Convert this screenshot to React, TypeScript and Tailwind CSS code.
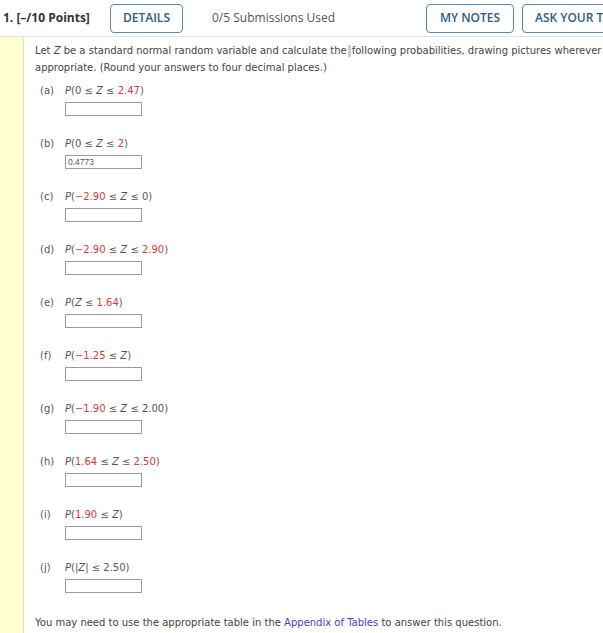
import React from "react";

const R = ({ children }: { children: React.ReactNode }) => (
  <span className="text-[#d63a3a]">{children}</span>
);
const I = ({ children }: { children: React.ReactNode }) => (
  <span className="italic">{children}</span>
);

const parts: { label: string; expr: React.ReactNode; value?: string }[] = [
  { label: "(a)", expr: <><I>P</I>(0 ≤ <I>Z</I> ≤ <R>2.47</R>)</> },
  { label: "(b)", expr: <><I>P</I>(0 ≤ <I>Z</I> ≤ <R>2</R>)</>, value: "0.4773" },
  { label: "(c)", expr: <><I>P</I>(<R>−2.90</R> ≤ <I>Z</I> ≤ 0)</> },
  { label: "(d)", expr: <><I>P</I>(<R>−2.90</R> ≤ <I>Z</I> ≤ <R>2.90</R>)</> },
  { label: "(e)", expr: <><I>P</I>(<I>Z</I> ≤ <R>1.64</R>)</> },
  { label: "(f)", expr: <><I>P</I>(<R>−1.25</R> ≤ <I>Z</I>)</> },
  { label: "(g)", expr: <><I>P</I>(<R>−1.90</R> ≤ <I>Z</I> ≤ 2.00)</> },
  { label: "(h)", expr: <><I>P</I>(<R>1.64</R> ≤ <I>Z</I> ≤ <R>2.50</R>)</> },
  { label: "(i)", expr: <><I>P</I>(<R>1.90</R> ≤ <I>Z</I>)</> },
  { label: "(j)", expr: <><I>P</I>(|<I>Z</I>| ≤ 2.50)</> },
];

export default function App() {
  return (
    <div className="w-[603px] h-[633px] overflow-hidden bg-white">
      <div
        className="flex items-center h-[37px] pl-[3px] border-b border-[#e2e2e2] bg-white whitespace-nowrap"
        style={{ fontFamily: '"Open Sans", sans-serif' }}
      >
        <span className="text-[12px] font-bold text-[#333] w-[107px] shrink-0">1. [–/10 Points]</span>
        <div className="h-[29px] w-[73px] shrink-0 flex items-center justify-center border border-[#5a86ad] rounded-[4px] text-[12px] font-semibold text-[#2b5c88]">
          DETAILS
        </div>
        <span className="ml-[29px] text-[12px] text-[#555] w-[214px] shrink-0">0/5 Submissions Used</span>
        <div className="h-[29px] w-[88px] shrink-0 flex items-center justify-center border border-[#5a86ad] rounded-[4px] text-[12px] font-semibold text-[#2b5c88]">
          MY NOTES
        </div>
        <div className="ml-[8px] h-[29px] w-[140px] shrink-0 flex items-center pl-[12px] border border-[#5a86ad] rounded-[4px] text-[12px] font-semibold text-[#2b5c88]">
          ASK YOUR TEACHER
        </div>
      </div>
      <div className="flex h-[596px]">
        <div className="w-[24px] shrink-0 bg-[#ffffcf] border-r border-[#e0e0c0]" />
        <div
          className="pl-[11px] pt-[5px] text-[10px] text-[#444] whitespace-nowrap"
          style={{ fontFamily: '"DejaVu Sans", Verdana, sans-serif' }}
        >
          <div className="leading-[17px]">
            Let <I>Z</I> be a standard normal random variable and calculate the
            <span className="inline-block w-[3px] h-[12px] bg-[#ccc] align-middle mx-[1px]" />
            following probabilities, drawing pictures wherever
            <br />
            appropriate. (Round your answers to four decimal places.)
          </div>
          <div className="mt-[7px] flex flex-col gap-[20px]">
            {parts.map((p) => (
              <div key={p.label} className="pl-[5px]">
                <div className="flex leading-[16px] text-[#555]">
                  <span className="w-[25px]">{p.label}</span>
                  <span>{p.expr}</span>
                </div>
                <div
                  className="ml-[25px] mt-[3px] w-[77px] h-[14px] border border-[#9a9a9a] bg-white flex items-center pl-[2px] text-[8.5px] text-[#555]"
                  style={{ fontFamily: '"Liberation Sans", Arial, sans-serif' }}
                >
                  {p.value ?? ""}
                </div>
              </div>
            ))}
          </div>
          <div className="mt-[22px] leading-[16px]">
            You may need to use the appropriate table in the{" "}
            <span className="text-[#4343c4]">Appendix of Tables</span> to answer this question.
          </div>
        </div>
      </div>
    </div>
  );
}
